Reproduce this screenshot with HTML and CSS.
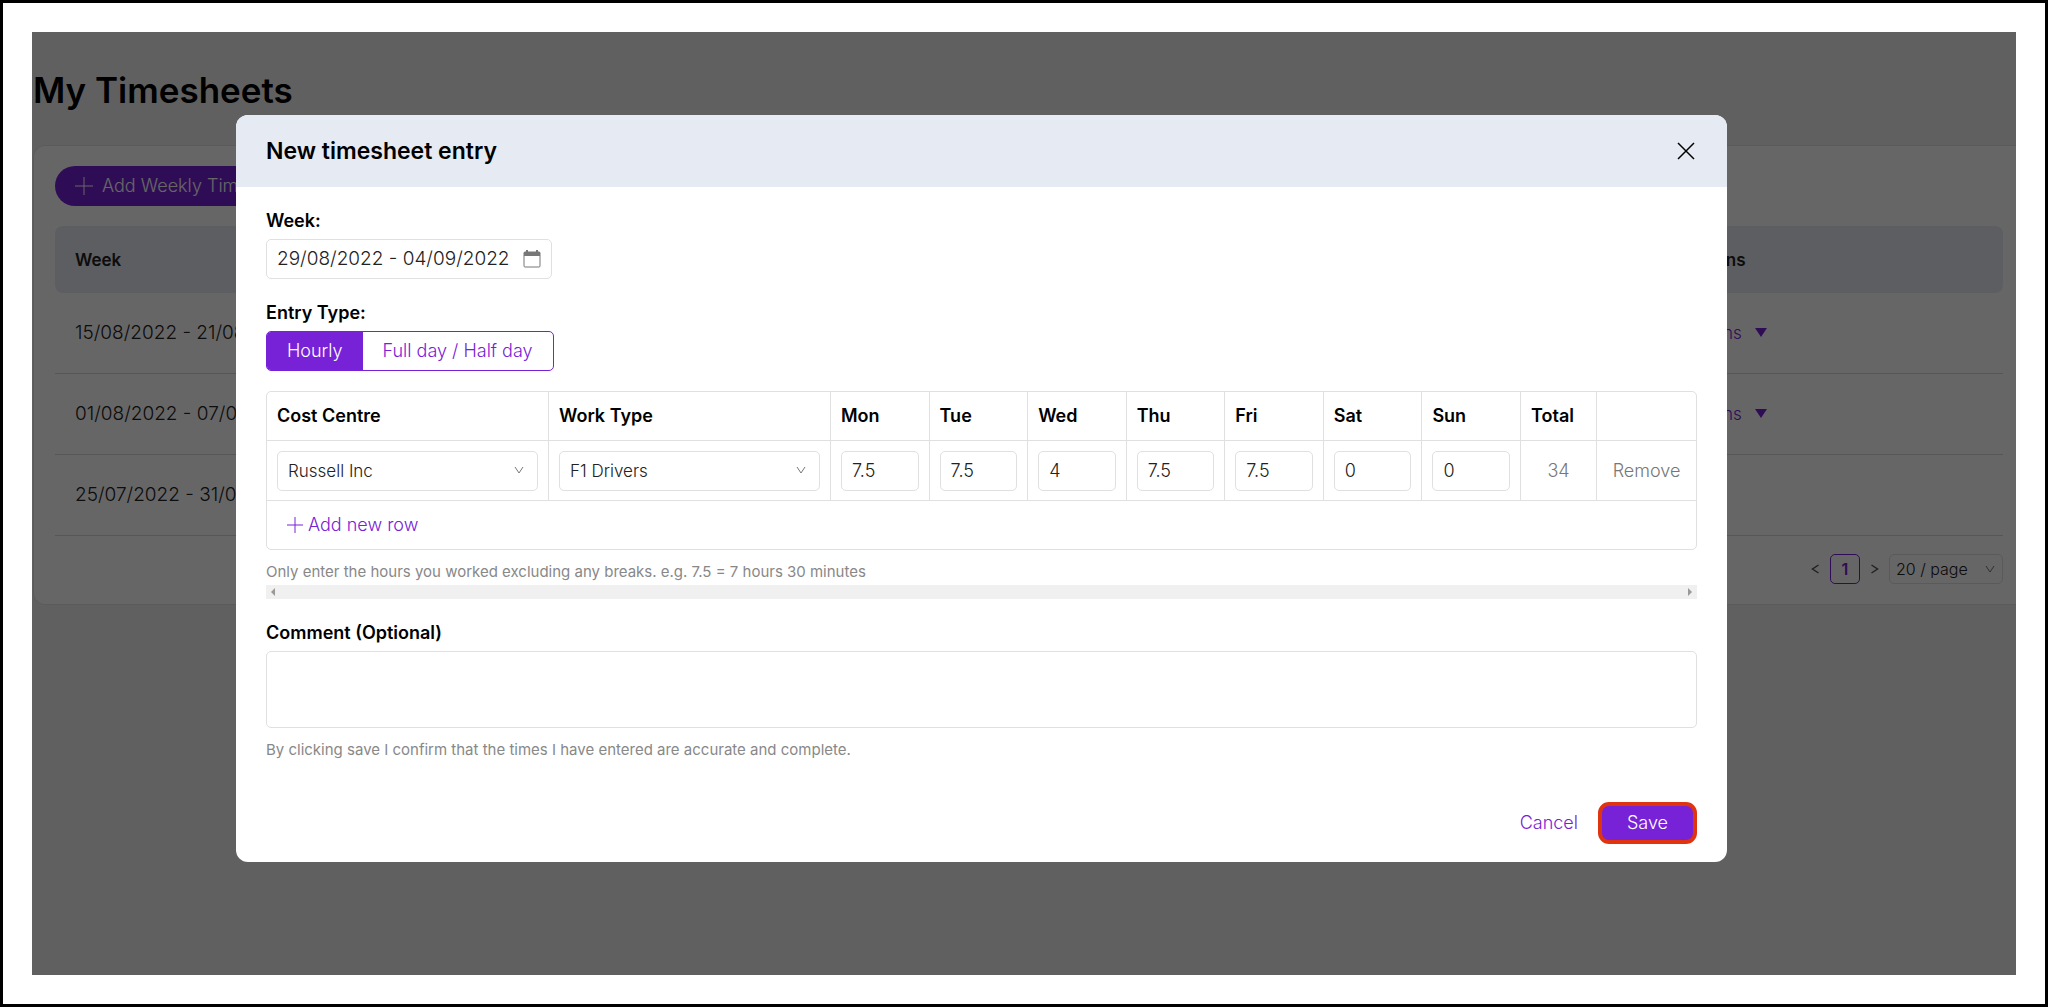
FILE: index.html
```html
<!DOCTYPE html>
<html lang="en">
<head>
<meta charset="utf-8">
<title>My Timesheets</title>
<link rel="stylesheet" href="styles.css">
</head>
<body>
<div class="app">
  <main class="page">
    <h1 class="page-title">My Timesheets</h1>
    <section class="card">
      <button class="add-button" type="button">
        <svg class="icon-plus" viewBox="0 0 18 18" aria-hidden="true"><path d="M9 0v18M0 9h18"/></svg>
        Add Weekly Timesheet
      </button>
      <table class="list">
        <thead><tr><th>Week</th><th class="list-actions">Actions</th></tr></thead>
        <tbody>
          <tr><td>15/08/2022 - 21/08/2022</td><td><button class="action" type="button">Actions <svg viewBox="0 0 12 10" aria-hidden="true"><path d="M0 0h12L6 9z"/></svg></button></td></tr>
          <tr><td>01/08/2022 - 07/08/2022</td><td><button class="action" type="button">Actions <svg viewBox="0 0 12 10" aria-hidden="true"><path d="M0 0h12L6 9z"/></svg></button></td></tr>
          <tr><td>25/07/2022 - 31/07/2022</td><td></td></tr>
        </tbody>
      </table>
      <nav class="pager" aria-label="Pagination">
        <button class="pager-arrow" type="button" aria-label="Previous page"><svg viewBox="0 0 8 10" aria-hidden="true"><path d="M7 1 1 5l6 4"/></svg></button>
        <button class="pager-current" type="button">1</button>
        <button class="pager-arrow" type="button" aria-label="Next page"><svg viewBox="0 0 8 10" aria-hidden="true"><path d="m1 1 6 4-6 4"/></svg></button>
        <span class="select page-size">
          <select aria-label="Page size"><option>20 / page</option></select>
          <svg viewBox="0 0 10 9" aria-hidden="true"><path d="m1 1 4 6 4-6"/></svg>
        </span>
      </nav>
    </section>
  </main>

  <div class="overlay">
    <form class="modal" role="dialog" aria-labelledby="modal-title">
      <header class="modal-header">
        <h2 class="modal-title" id="modal-title">New timesheet entry</h2>
        <button class="close" type="button" aria-label="Close"><svg viewBox="0 0 18 18" aria-hidden="true"><path d="m1 1 16 16M17 1 1 17"/></svg></button>
      </header>
      <div class="modal-body">
        <label class="label" for="week">Week:</label>
        <div class="date-field">
          <input id="week" type="text" value="29/08/2022 - 04/09/2022">
          <svg viewBox="0 0 18 18" aria-hidden="true"><rect x="1" y="2" width="16" height="15" rx="1"/><path class="fill" d="M1 2h2V0h2v2h8V0h2v2h2v4H1z"/></svg>
        </div>

        <fieldset class="entry-type">
          <legend class="label">Entry Type:</legend>
          <div class="segments">
            <label class="segment"><input type="radio" name="type" checked><span>Hourly</span></label>
            <label class="segment"><input type="radio" name="type"><span>Full day / Half day</span></label>
          </div>
        </fieldset>

        <div class="grid-box">
          <table class="hours">
            <colgroup><col class="col-wide" span="2"><col span="7"><col class="col-total"><col class="col-remove"></colgroup>
            <thead>
              <tr><th>Cost Centre</th><th>Work Type</th><th>Mon</th><th>Tue</th><th>Wed</th><th>Thu</th><th>Fri</th><th>Sat</th><th>Sun</th><th>Total</th><th></th></tr>
            </thead>
            <tbody>
              <tr>
                <td><span class="select"><select aria-label="Cost Centre"><option>Russell Inc</option></select><svg viewBox="0 0 10 9" aria-hidden="true"><path d="m1 1 4 6 4-6"/></svg></span></td>
                <td><span class="select"><select aria-label="Work Type"><option>F1 Drivers</option></select><svg viewBox="0 0 10 9" aria-hidden="true"><path d="m1 1 4 6 4-6"/></svg></span></td>
                <td><input type="text" aria-label="Mon" value="7.5"></td>
                <td><input type="text" aria-label="Tue" value="7.5"></td>
                <td><input type="text" aria-label="Wed" value="4"></td>
                <td><input type="text" aria-label="Thu" value="7.5"></td>
                <td><input type="text" aria-label="Fri" value="7.5"></td>
                <td><input type="text" aria-label="Sat" value="0"></td>
                <td><input type="text" aria-label="Sun" value="0"></td>
                <td class="total">34</td>
                <td class="remove"><button type="button">Remove</button></td>
              </tr>
            </tbody>
            <tfoot>
              <tr><td colspan="11"><button class="add-row" type="button"><svg viewBox="0 0 16 16" aria-hidden="true"><path d="M8 0v16M0 8h16"/></svg>Add new row</button></td></tr>
            </tfoot>
          </table>
        </div>
        <p class="note">Only enter the hours you worked excluding any breaks. e.g. 7.5 = 7 hours 30 minutes</p>
        <div class="scroller" aria-hidden="true">
          <svg viewBox="0 0 4 8"><path d="M4 0v8L0 4z"/></svg>
          <svg viewBox="0 0 4 8"><path d="M0 0v8l4-4z"/></svg>
        </div>

        <label class="label" for="comment">Comment (Optional)</label>
        <textarea class="comment" id="comment"></textarea>
        <p class="note">By clicking save I confirm that the times I have entered are accurate and complete.</p>
      </div>
      <footer class="modal-footer">
        <button class="cancel" type="button">Cancel</button>
        <button class="save" type="submit">Save</button>
      </footer>
    </form>
  </div>
</div>
</body>
</html>
```
FILE: styles.css
```css
* {
  box-sizing: border-box;
}

body {
  margin: 0;
  min-height: 100vh;
  display: flex;
  padding: 29px;
  border: 3px solid #000;
  background: #fff;
  color: #222;
  font: 300 18px/24px Inter, "Liberation Sans", sans-serif;
}

button, input, select, textarea {
  font: inherit;
  color: inherit;
  margin: 0;
}

button {
  padding: 0;
  border: 0;
  background: none;
}

svg {
  fill: none;
  stroke: currentColor;
  flex: none;
}

.app {
  position: relative;
  flex: 1;
  overflow: hidden;
  background: #f0f0f0;
}

/* Timesheet list behind the dialog */
.page {
  padding-left: 1px;
}

.page-title {
  margin: 0;
  padding: 34px 0 31px;
  font-size: 35px;
  line-height: 48px;
  font-weight: 600;
  color: #000;
}

.card {
  padding: 20px 13px 20px 21px;
  border: 1px solid #e4e4e4;
  border-right: 0;
  border-radius: 12px 0 0 12px;
  background: #fff;
}

.add-button {
  display: flex;
  align-items: center;
  gap: 9px;
  height: 40px;
  padding: 0 20px;
  border-radius: 20px;
  background: #7722d6;
  color: #fff;
  font-size: 18px;
}

.icon-plus {
  width: 18px;
  height: 18px;
}

.list {
  width: 100%;
  margin-top: 20px;
  border-collapse: separate;
  border-spacing: 0;
  text-align: left;
}

.list th {
  height: 67px;
  padding: 0 20px;
  background: #e6eaf2;
  font-size: 17px;
  font-weight: 600;
}

.list th:first-child {
  border-radius: 8px 0 0 8px;
}

.list th:last-child {
  border-radius: 0 8px 8px 0;
}

.list-actions {
  width: 340px;
}

.list td {
  height: 81px;
  padding: 0 20px;
  border-bottom: 1px solid #d8d8d8;
}

.list td:first-child {
  font-size: 19px;
}

.action {
  display: flex;
  align-items: center;
  gap: 13px;
  color: #7722d6;
  font-size: 17px;
}

.action svg {
  width: 12px;
  height: 10px;
  fill: currentColor;
  stroke: none;
}

.pager {
  display: flex;
  justify-content: flex-end;
  align-items: center;
  gap: 10px;
  margin-top: 18px;
  font-size: 16px;
}

.pager-arrow {
  display: flex;
  color: #555;
}

.pager-arrow svg {
  width: 9px;
  height: 10px;
  stroke-width: 1.5;
}

.pager-current {
  width: 30px;
  height: 30px;
  border: 1px solid #7722d6;
  border-radius: 5px;
  color: #7722d6;
  font-weight: 600;
}

/* Select box with its own arrow */
.select {
  display: grid;
  align-items: center;
  color: #222;
  font-size: 17px;
}

.select select {
  grid-area: 1 / 1;
  width: 100%;
  height: 40px;
  padding: 0 10px;
  border: 1px solid #e0e0e0;
  border-radius: 5px;
  background: #fff;
  appearance: none;
}

.select svg {
  grid-area: 1 / 1;
  justify-self: end;
  width: 10px;
  height: 9px;
  margin-right: 14px;
  color: #777;
  pointer-events: none;
}

.page-size {
  width: 114px;
  font-size: 16px;
}

.page-size select {
  height: 30px;
  padding: 0 6px;
}

.page-size svg {
  margin-right: 8px;
}

/* Dialog */
.overlay {
  position: absolute;
  inset: 0;
  padding: 83px 289px 83px 204px;
  background: rgba(0, 0, 0, 0.6);
}

.modal {
  border-radius: 12px;
  overflow: hidden;
  background: #fff;
}

.modal-header {
  display: flex;
  justify-content: space-between;
  align-items: center;
  height: 72px;
  padding: 0 32px 0 30px;
  background: #e6eaf2;
}

.modal-title {
  margin: 0;
  font-size: 23px;
  font-weight: 600;
  color: #000;
}

.close {
  display: flex;
  color: #000;
}

.close svg {
  width: 18px;
  height: 18px;
  stroke-width: 1.5;
}

.modal-body {
  padding: 22px 30px 0;
}

.label {
  display: block;
  padding: 0 0 6px;
  font-weight: 600;
  color: #000;
}

.date-field {
  display: flex;
  align-items: center;
  width: 286px;
  height: 40px;
  padding: 0 10px;
  border: 1px solid #e0e0e0;
  border-radius: 5px;
}

.date-field input {
  flex: 1;
  min-width: 0;
  padding: 0;
  border: 0;
  background: none;
  color: #222;
  font-size: 19px;
}

.date-field svg {
  width: 18px;
  height: 18px;
  color: #777;
}

.fill {
  fill: currentColor;
  stroke: none;
}

.entry-type {
  margin: 22px 0 20px;
  padding: 0;
  border: 0;
}

.segments {
  display: inline-flex;
  vertical-align: top;
  height: 40px;
  border: 1px solid #7722d6;
  border-radius: 5px;
  overflow: hidden;
  color: #7722d6;
}

.segment {
  display: grid;
}

.segment input {
  grid-area: 1 / 1;
  appearance: none;
}

.segment span {
  grid-area: 1 / 1;
  padding: 7px 20px;
}

.segment input:checked + span {
  background: #7722d6;
  color: #fff;
}

.grid-box {
  border: 1px solid #e0e0e0;
  border-radius: 5px;
}

.hours {
  width: 100%;
  table-layout: fixed;
  border-spacing: 0;
  text-align: left;
}

.col-wide {
  width: 282px;
}

.col-total {
  width: 76px;
}

.col-remove {
  width: 99px;
}

.hours th,
.hours tbody td {
  padding: 0 10px;
  border-right: 1px solid #e0e0e0;
  border-bottom: 1px solid #e0e0e0;
}

.hours th:last-child,
.hours tbody td:last-child {
  border-right: 0;
}

.hours th {
  height: 49px;
  font-weight: 600;
  color: #000;
}

.hours tbody td {
  height: 60px;
}

.hours input {
  display: block;
  width: 100%;
  height: 40px;
  padding: 0 10px;
  border: 1px solid #e0e0e0;
  border-radius: 5px;
  color: #222;
}

.hours .total,
.hours .remove {
  padding: 0;
  text-align: center;
  color: #777;
}

.hours tfoot td {
  height: 48px;
  padding: 0 20px;
}

.add-row {
  display: flex;
  align-items: center;
  gap: 5px;
  color: #7722d6;
}

.add-row svg {
  width: 16px;
  height: 16px;
}

.note {
  margin: 10px 0 0;
  font-size: 15px;
  font-weight: 400;
  color: #888;
}

.scroller {
  display: flex;
  justify-content: space-between;
  align-items: center;
  height: 14px;
  margin: 1px 0 22px;
  padding: 0 5px;
  background: #f0f0f0;
}

.scroller svg {
  width: 4px;
  height: 8px;
  fill: #999;
  stroke: none;
}

.comment {
  display: block;
  width: 100%;
  height: 77px;
  padding: 8px 10px;
  border: 1px solid #e0e0e0;
  border-radius: 5px;
  resize: none;
}

.modal-footer {
  display: flex;
  justify-content: flex-end;
  align-items: center;
  gap: 20px;
  padding: 40px 30px 18px;
}

.cancel {
  color: #7722d6;
}

.save {
  width: 99px;
  height: 42px;
  border: 4px solid #e03410;
  border-radius: 11px;
  background: #7722d6;
  color: #fff;
}
```
